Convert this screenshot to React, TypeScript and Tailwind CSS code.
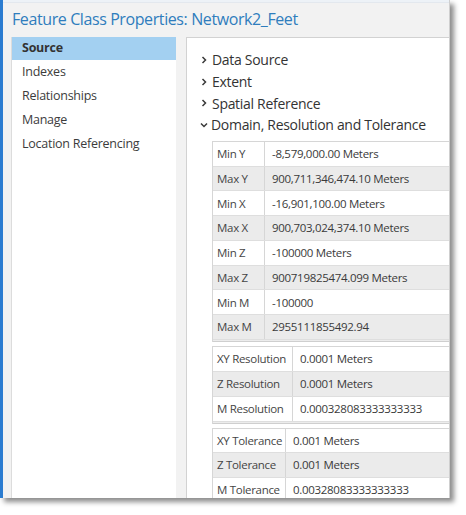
import React from "react";

const nav = ["Source", "Indexes", "Relationships", "Manage", "Location Referencing"];
const sections = ["Data Source", "Extent", "Spatial Reference"];

const domain: [string, string][] = [
 ["Min Y", "-8,579,000.00 Meters"],
 ["Max Y", "900,711,346,474.10 Meters"],
 ["Min X", "-16,901,100.00 Meters"],
 ["Max X", "900,703,024,374.10 Meters"],
 ["Min Z", "-100000 Meters"],
 ["Max Z", "900719825474.099 Meters"],
 ["Min M", "-100000"],
 ["Max M", "2955111855492.94"],
];
const resolution: [string, string][] = [
 ["XY Resolution", "0.0001 Meters"],
 ["Z Resolution", "0.0001 Meters"],
 ["M Resolution", "0.000328083333333333"],
];
const tolerance: [string, string][] = [
 ["XY Tolerance", "0.001 Meters"],
 ["Z Tolerance", "0.001 Meters"],
 ["M Tolerance", "0.00328083333333333"],
];

function Chevron({ open }: { open?: boolean }) {
 return (
  <svg width="8" height="8" viewBox="0 0 8 8" className="shrink-0">
   <path
    d={open ? "M1 2.5l3 3 3-3" : "M2.5 1l3 3-3 3"}
    fill="none"
    stroke="#3a3a3a"
    strokeWidth="1.5"
   />
  </svg>
 );
}

function Table({ rows, labelW, rowH }: { rows: [string, string][]; labelW: string; rowH: string }) {
 return (
  <div className="w-[250px] border-l border-t border-[#d6d6d6]">
   {rows.map(([k, v], i) => (
    <div
     key={k}
     className={`flex ${rowH} items-center border-b border-[#dedede] ${i % 2 ? "bg-[#ebebeb]" : "bg-white"}`}
    >
     <div className={`${labelW} flex h-full shrink-0 items-center whitespace-nowrap border-r border-[#d6d6d6] pl-[4px] text-[#454545]`}>
      {k}
     </div>
     <div className="pl-[7px] whitespace-nowrap text-[#3a3a3a]">{v}</div>
    </div>
   ))}
   <div className="h-[2px] border-b border-[#cfcfcf] bg-[#ececec]" />
  </div>
 );
}

export default function App() {
 return (
  <div className="h-[515px] w-[466px] bg-white font-['Segoe_UI','Open_Sans',sans-serif]">
   <div className="flex h-[498px] w-[450px] flex-col border-l-[3px] border-r border-l-[#2b7cd0] border-r-[#cfcfcf] bg-[#f2f2f2] shadow-[4px_4px_5px_rgba(0,0,0,0.45)]">
    <div className="h-[3px] border-b border-[#e3e8ee] bg-[#edf2f7]" />
    <div className="h-[34px] pl-[9px] pt-[4px] text-[16px] leading-[24px] tracking-[-0.4px] text-[#2f7dbd]">
     Feature Class Properties: Network2_Feet
    </div>
    <div className="flex min-h-0 flex-1 gap-[10px] pl-[8px]">
     <div className="w-[165px] border-l border-[#dcdcdc] bg-white text-[12.5px] tracking-[-0.25px] text-[#3c3c3c]">
      {nav.map((n, i) => (
       <div
        key={n}
        className={`flex items-center pl-[10px] ${i === 0 ? "h-[23px] bg-[#a3d0f1] font-bold text-[#333]" : "h-[24px]"}`}
       >
        {n}
       </div>
      ))}
     </div>
     <div className="flex-1 overflow-hidden border-l border-t border-[#d2d2d2] bg-white pl-[13px] pt-[11px] text-[14px] tracking-[-0.3px] text-[#333]">
      {sections.map((s) => (
       <div key={s} className="flex h-[21.7px] items-center gap-[4px]">
        <Chevron />
        <span>{s}</span>
       </div>
      ))}
      <div className="flex h-[21.7px] items-center gap-[3px]">
       <Chevron open />
       <span>Domain, Resolution and Tolerance</span>
      </div>
      <div className="ml-[12px] mt-[5px] flex flex-col gap-[4px] text-[11.5px] tracking-[-0.3px]">
       <Table rows={domain} labelW="w-[52px]" rowH="h-[24.75px]" />
       <Table rows={resolution} labelW="w-[80px]" rowH="h-[25px]" />
       <Table rows={tolerance} labelW="w-[73px]" rowH="h-[24.5px]" />
      </div>
     </div>
    </div>
   </div>
  </div>
 );
}
